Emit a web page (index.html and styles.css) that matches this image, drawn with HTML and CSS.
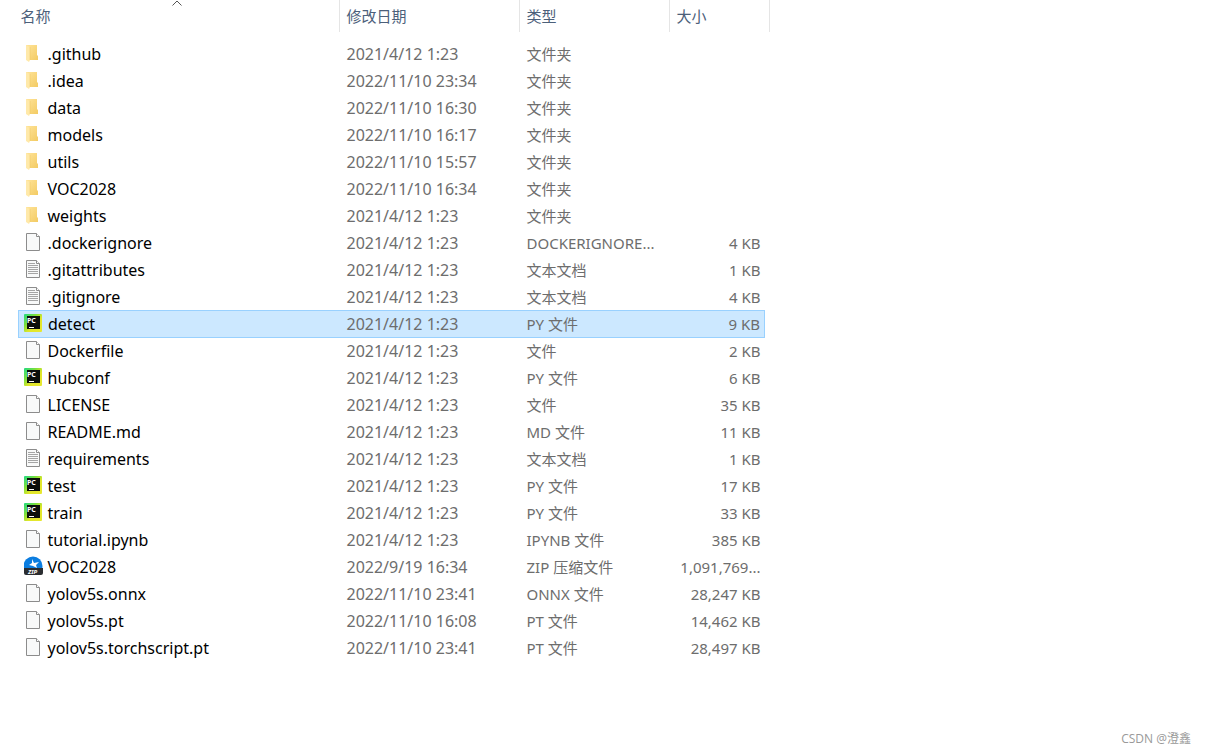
FILE: index.html
```html
<!DOCTYPE html>
<html lang="zh-CN">
<head>
    <meta charset="UTF-8">
    <meta name="viewport" content="width=device-width, initial-scale=1.0">
    <title>yolov5</title>
    <link rel="stylesheet" href="styles.css">
</head>
<body>

    <!-- File type icons -->
    <svg class="icon-defs" aria-hidden="true">
        <defs>
            <linearGradient id="folder-fill" x1="0" y1="0" x2="1" y2="1">
                <stop offset="0" stop-color="#ffe49a"/>
                <stop offset="1" stop-color="#f3cb63"/>
            </linearGradient>
            <linearGradient id="pycharm-fill" x1="0" y1="0" x2="1" y2="1">
                <stop offset="0" stop-color="#1fd983"/>
                <stop offset="0.35" stop-color="#7fe03a"/>
                <stop offset="0.6" stop-color="#e0e62a"/>
                <stop offset="1" stop-color="#e8e830"/>
            </linearGradient>
            <clipPath id="zip-top"><rect width="20" height="12"/></clipPath>
        </defs>
        <symbol id="folder" viewBox="0 0 20 20">
            <path d="M2 2h11v10l1 1v4H3z" fill="url(#folder-fill)"/>
            <path d="M2 2l4 2v13l-1 2-3-2z" fill="#ffe9a9"/>
            <path d="M6 4v13" stroke="#efc65c" stroke-width="0.5"/>
        </symbol>
        <symbol id="file" viewBox="0 0 20 20">
            <path d="M2.500 1.500h10l3 3v14h-13z" fill="#f8f9f9" stroke="#8c8c8c"/>
            <path d="M12.500 1.500v3h3" fill="#fff" stroke="#8c8c8c"/>
        </symbol>
        <symbol id="text" viewBox="0 0 20 20">
            <path d="M2.500 1.500h10l3 3v14h-13z" fill="#f8f9f9" stroke="#8c8c8c"/>
            <path d="M12.500 1.500v3h3" fill="#fff" stroke="#8c8c8c"/>
            <path d="M4 4.500h7M4 6.500h10M4 8.500h10M4 10.500h10M4 12.500h10M4 14.500h10" stroke="#a5a5a5"/>
        </symbol>
        <symbol id="pycharm" viewBox="0 0 20 20">
            <rect x="0" y="1" width="18" height="18" rx="1" fill="url(#pycharm-fill)"/>
            <rect x="3" y="3" width="13" height="13" fill="#0b0f0b"/>
            <path d="M5 14.500h5" stroke="#fff"/>
        </symbol>
        <symbol id="zip" viewBox="0 0 20 20">
            <circle cx="9" cy="10" r="9.500" fill="#0b7de0" clip-path="url(#zip-top)"/>
            <path d="M8 3l2 4 5-1-3 3 1 3-4-2-4-1 3-2z" fill="#fff"/>
            <path d="M0 12h19v5q0 2-2 2H2q-2 0-2-2z" fill="#2b2d31"/>
        </symbol>
    </svg>

    <main class="file-list">
        <table class="files">
            <colgroup>
                <col class="col-name">
                <col class="col-date">
                <col class="col-type">
                <col class="col-size">
                <col class="col-edge">
            </colgroup>
            <thead>
                <tr>
                    <th aria-sort="ascending">
                        <button type="button" class="sort sort-name">名称
                            <svg class="sort-arrow" viewBox="0 0 10 6" aria-hidden="true"><path d="M0.500 5.500L5 1l4.500 4.500" fill="none" stroke="#555"/></svg>
                        </button>
                    </th>
                    <th><button type="button" class="sort">修改日期</button></th>
                    <th><button type="button" class="sort">类型</button></th>
                    <th colspan="2"><button type="button" class="sort">大小</button></th>
                </tr>
            </thead>
            <tbody>
                <tr><td class="name"><svg class="icon"><use href="#folder"/></svg>.github</td><td class="date">2021/4/12 1:23</td><td>文件夹</td><td class="size"></td></tr>
                <tr><td class="name"><svg class="icon"><use href="#folder"/></svg>.idea</td><td class="date">2022/11/10 23:34</td><td>文件夹</td><td class="size"></td></tr>
                <tr><td class="name"><svg class="icon"><use href="#folder"/></svg>data</td><td class="date">2022/11/10 16:30</td><td>文件夹</td><td class="size"></td></tr>
                <tr><td class="name"><svg class="icon"><use href="#folder"/></svg>models</td><td class="date">2022/11/10 16:17</td><td>文件夹</td><td class="size"></td></tr>
                <tr><td class="name"><svg class="icon"><use href="#folder"/></svg>utils</td><td class="date">2022/11/10 15:57</td><td>文件夹</td><td class="size"></td></tr>
                <tr><td class="name"><svg class="icon"><use href="#folder"/></svg>VOC2028</td><td class="date">2022/11/10 16:34</td><td>文件夹</td><td class="size"></td></tr>
                <tr><td class="name"><svg class="icon"><use href="#folder"/></svg>weights</td><td class="date">2021/4/12 1:23</td><td>文件夹</td><td class="size"></td></tr>
                <tr><td class="name"><svg class="icon"><use href="#file"/></svg>.dockerignore</td><td class="date">2021/4/12 1:23</td><td>DOCKERIGNORE...</td><td class="size">4 KB</td></tr>
                <tr><td class="name"><svg class="icon"><use href="#text"/></svg>.gitattributes</td><td class="date">2021/4/12 1:23</td><td>文本文档</td><td class="size">1 KB</td></tr>
                <tr><td class="name"><svg class="icon"><use href="#text"/></svg>.gitignore</td><td class="date">2021/4/12 1:23</td><td>文本文档</td><td class="size">4 KB</td></tr>
                <tr class="selected"><td class="name"><svg class="icon"><use href="#pycharm"/><text x="3" y="10" class="icon-text">PC</text></svg>detect</td><td class="date">2021/4/12 1:23</td><td>PY 文件</td><td class="size">9 KB</td></tr>
                <tr><td class="name"><svg class="icon"><use href="#file"/></svg>Dockerfile</td><td class="date">2021/4/12 1:23</td><td>文件</td><td class="size">2 KB</td></tr>
                <tr><td class="name"><svg class="icon"><use href="#pycharm"/><text x="3" y="10" class="icon-text">PC</text></svg>hubconf</td><td class="date">2021/4/12 1:23</td><td>PY 文件</td><td class="size">6 KB</td></tr>
                <tr><td class="name"><svg class="icon"><use href="#file"/></svg>LICENSE</td><td class="date">2021/4/12 1:23</td><td>文件</td><td class="size">35 KB</td></tr>
                <tr><td class="name"><svg class="icon"><use href="#file"/></svg>README.md</td><td class="date">2021/4/12 1:23</td><td>MD 文件</td><td class="size">11 KB</td></tr>
                <tr><td class="name"><svg class="icon"><use href="#text"/></svg>requirements</td><td class="date">2021/4/12 1:23</td><td>文本文档</td><td class="size">1 KB</td></tr>
                <tr><td class="name"><svg class="icon"><use href="#pycharm"/><text x="3" y="10" class="icon-text">PC</text></svg>test</td><td class="date">2021/4/12 1:23</td><td>PY 文件</td><td class="size">17 KB</td></tr>
                <tr><td class="name"><svg class="icon"><use href="#pycharm"/><text x="3" y="10" class="icon-text">PC</text></svg>train</td><td class="date">2021/4/12 1:23</td><td>PY 文件</td><td class="size">33 KB</td></tr>
                <tr><td class="name"><svg class="icon"><use href="#file"/></svg>tutorial.ipynb</td><td class="date">2021/4/12 1:23</td><td>IPYNB 文件</td><td class="size">385 KB</td></tr>
                <tr><td class="name"><svg class="icon"><use href="#zip"/><text x="4" y="18" class="icon-text icon-text-zip">ZIP</text></svg>VOC2028</td><td class="date">2022/9/19 16:34</td><td>ZIP 压缩文件</td><td class="size">1,091,769...</td></tr>
                <tr><td class="name"><svg class="icon"><use href="#file"/></svg>yolov5s.onnx</td><td class="date">2022/11/10 23:41</td><td>ONNX 文件</td><td class="size">28,247 KB</td></tr>
                <tr><td class="name"><svg class="icon"><use href="#file"/></svg>yolov5s.pt</td><td class="date">2022/11/10 16:08</td><td>PT 文件</td><td class="size">14,462 KB</td></tr>
                <tr><td class="name"><svg class="icon"><use href="#file"/></svg>yolov5s.torchscript.pt</td><td class="date">2022/11/10 23:41</td><td>PT 文件</td><td class="size">28,497 KB</td></tr>
            </tbody>
        </table>
    </main>

    <footer class="credit">CSDN @澄鑫</footer>

</body>
</html>
```
FILE: styles.css
```css
* {
    margin: 0;
    padding: 0;
    box-sizing: border-box;
}

body {
    font-family: 'Noto Sans', 'Noto Sans CJK SC', sans-serif;
    font-size: 15px;
    line-height: 20px;
    color: #6d6d6d;
    background: #fff;
    min-height: 100vh;
    display: flex;
    flex-direction: column;
}

.icon-defs {
    position: absolute;
    width: 0;
    height: 0;
}

.icon-text {
    font: bold 7px 'Noto Sans', sans-serif;
    fill: #fff;
}

.icon-text-zip {
    font-size: 6px;
    font-style: italic;
}

/* File table */
.file-list {
    padding-left: 18px;
}

.files {
    table-layout: fixed;
    width: 751px;
    border-collapse: collapse;
}

.col-name {
    width: 321px;
}

.col-date {
    width: 180px;
}

.col-type {
    width: 150px;
}

.col-size {
    width: 95px;
}

.col-edge {
    width: 5px;
}

/* Column headers */
.files th {
    height: 40px;
    vertical-align: top;
}

.sort {
    display: block;
    position: relative;
    width: 100%;
    height: 32px;
    padding-left: 7px;
    border: none;
    border-right: 1px solid #e5e5e5;
    background: none;
    font: inherit;
    font-weight: 400;
    color: #4c607a;
    text-align: left;
}

.sort-name {
    padding-left: 2px;
}

.sort-arrow {
    position: absolute;
    top: 0;
    left: calc(50% - 7px);
    width: 10px;
    height: 6px;
}

/* Rows */
.files td {
    height: 27px;
    padding-left: 7px;
    border-top: 1px solid transparent;
    white-space: nowrap;
}

.files .name {
    padding-left: 5px;
    font-size: 16px;
    color: #000;
}

.files .date {
    font-size: 16px;
}

.files .size {
    padding-right: 4px;
    text-align: right;
}

.icon {
    width: 20px;
    height: 20px;
    margin-right: 4px;
    vertical-align: -3px;
}

.selected td {
    background: #cce8ff;
    border-top: 1px solid #99d1ff;
    border-bottom: 1px solid #99d1ff;
}

.selected td:first-child {
    border-left: 1px solid #99d1ff;
}

.selected td:last-child {
    border-right: 1px solid #99d1ff;
}

/* Watermark */
.credit {
    margin-top: auto;
    padding: 0 15px 5px 0;
    font-family: 'Open Sans', 'Noto Sans CJK SC', sans-serif;
    font-size: 12px;
    color: #999;
    text-align: right;
}
```
